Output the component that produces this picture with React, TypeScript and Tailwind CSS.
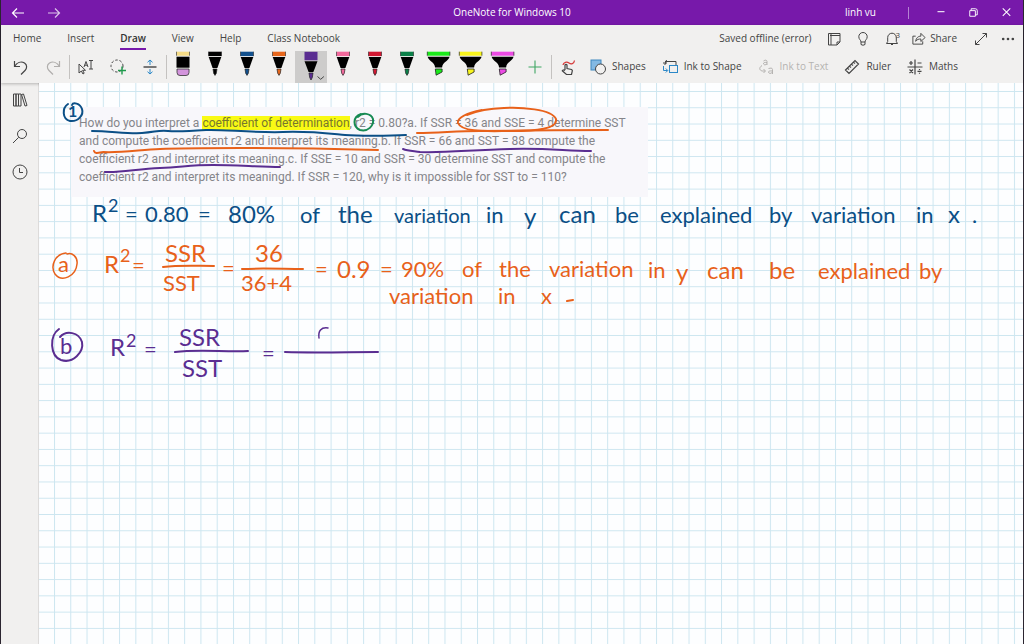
import type { ReactNode } from "react";

type PenProps = { color: string; name: string };
type Word = { x: number; y: number; text: string; size?: string };

const BLUE = "#0b4f86";
const ORANGE = "#e8611a";
const PURPLE = "#5a2d91";

const tabs = ["Home", "Insert", "Draw", "View", "Help", "Class Notebook"];

const blueWords: Word[] = [
  { x: 92, y: 222, text: "R", size: "text-[24px]" },
  { x: 108, y: 212, text: "2", size: "text-[18px]" },
  { x: 125, y: 222, text: "=" },
  { x: 145, y: 222, text: "0.80" },
  { x: 198, y: 222, text: "=" },
  { x: 228, y: 223, text: "80%", size: "text-[24px]" },
  { x: 300, y: 223, text: "of" },
  { x: 338, y: 223, text: "the", size: "text-[24px]" },
  { x: 394, y: 223, text: "variation", size: "text-[20px]" },
  { x: 486, y: 223, text: "in" },
  { x: 524, y: 225, text: "y", size: "text-[24px]" },
  { x: 559, y: 223, text: "can", size: "text-[24px]" },
  { x: 615, y: 223, text: "be" },
  { x: 660, y: 223, text: "explained" },
  { x: 769, y: 223, text: "by" },
  { x: 811, y: 223, text: "variation" },
  { x: 916, y: 223, text: "in" },
  { x: 948, y: 223, text: "x", size: "text-[24px]" },
  { x: 972, y: 223, text: "." },
];

const orangeWords: Word[] = [
  { x: 58, y: 272, text: "a" },
  { x: 104, y: 273, text: "R", size: "text-[24px]" },
  { x: 120, y: 262, text: "2", size: "text-[18px]" },
  { x: 132, y: 273, text: "=" },
  { x: 165, y: 262, text: "SSR", size: "text-[24px]" },
  { x: 163, y: 291, text: "SST" },
  { x: 222, y: 276, text: "=" },
  { x: 255, y: 262, text: "36", size: "text-[24px]" },
  { x: 241, y: 291, text: "36+4" },
  { x: 315, y: 277, text: "=" },
  { x: 337, y: 278, text: "0.9", size: "text-[24px]" },
  { x: 380, y: 277, text: "=" },
  { x: 401, y: 277, text: "90%" },
  { x: 462, y: 277, text: "of" },
  { x: 499, y: 277, text: "the" },
  { x: 549, y: 277, text: "variation" },
  { x: 648, y: 278, text: "in" },
  { x: 676, y: 281, text: "y", size: "text-[24px]" },
  { x: 707, y: 279, text: "can", size: "text-[24px]" },
  { x: 769, y: 279, text: "be", size: "text-[24px]" },
  { x: 818, y: 279, text: "explained" },
  { x: 919, y: 279, text: "by" },
  { x: 389, y: 304, text: "variation" },
  { x: 498, y: 304, text: "in" },
  { x: 541, y: 304, text: "x" },
];

const purpleWords: Word[] = [
  { x: 60, y: 354, text: "b" },
  { x: 110, y: 356, text: "R", size: "text-[24px]" },
  { x: 126, y: 347, text: "2", size: "text-[18px]" },
  { x: 144, y: 357, text: "=" },
  { x: 179, y: 346, text: "SSR", size: "text-[24px]" },
  { x: 182, y: 377, text: "SST", size: "text-[24px]" },
  { x: 262, y: 361, text: "=" },
];

const InkWords = ({ words, color }: { words: Word[]; color: string }) => (
  <g fill={color} className="font-['Lato',sans-serif]">
    {words.map((w) => (
      <text key={`${w.x}-${w.y}`} x={w.x} y={w.y} className={w.size ?? "text-[22px]"}>
        {w.text}
      </text>
    ))}
  </g>
);

const Icon = ({ children, size = 16 }: { children: ReactNode; size?: number }) => (
  <svg
    width={size}
    height={size}
    viewBox="0 0 16 16"
    fill="none"
    stroke="currentColor"
    strokeWidth="1"
    className="shrink-0"
    aria-hidden="true"
  >
    {children}
  </svg>
);

const Tool = ({ label, children }: { label: string; children: ReactNode }) => (
  <button aria-label={label} className="flex h-8 w-8 shrink-0 items-center justify-center">
    {children}
  </button>
);

const TextTool = ({ label, children, disabled }: { label: string; children: ReactNode; disabled?: boolean }) => (
  <button disabled={disabled} className="flex items-center gap-1.5 whitespace-nowrap disabled:text-[#b5b3b1]">
    {children}
    {label}
  </button>
);

const Divider = () => <span className="h-6 w-px shrink-0 bg-[#c4c2c0]" />;

const Pen = ({ color, name }: PenProps) => (
  <button aria-label={name} className="h-8 w-8 shrink-0">
    <svg width="32" height="32" viewBox="0 0 32 32" aria-hidden="true">
      <rect x="9.5" y="0.7" width="13" height="4.4" fill={color} />
      <path d="M9.5 .7v4.4M22.5 .7v4.4" stroke="#222" strokeWidth=".6" />
      <path d="M9.7 5.9h12.6L18.4 16.9h-4.8z" fill="#000" />
      <path d="M14 18h4l-.7 4.2-1.3 2.2-1.3-2.2z" fill={color} stroke="#222" strokeWidth=".7" />
    </svg>
  </button>
);

const Highlighter = ({ color, name }: PenProps) => (
  <button aria-label={name} className="h-8 w-8 shrink-0">
    <svg width="32" height="32" viewBox="0 0 32 32" aria-hidden="true">
      <rect x="4.3" y="0.7" width="22.6" height="4" fill={color} />
      <path d="M4.3 .7v4M26.9 .7v4" stroke="#222" strokeWidth=".7" />
      <path d="M4.6 5.7h22c-1.2 4.6-7 5-7.5 10.8h-7C11.6 10.7 5.8 10.3 4.6 5.7z" fill="#000" />
      <path d="M12.3 18h6.8v3l-6 3.2-.3-2.4z" fill={color} stroke="#222" strokeWidth=".8" />
    </svg>
  </button>
);

const TitleBar = () => (
  <header className="grid h-[25px] grid-cols-[1fr_auto_1fr] items-center bg-[#7719aa] text-[10px] text-white">
    <div className="flex items-center gap-5 pl-[9px]">
      <button aria-label="Back">
        <Icon>
          <path d="M14 8H2.5M7 3.5 2.5 8 7 12.5" strokeWidth="1.2" />
        </Icon>
      </button>
      <button aria-label="Forward" className="opacity-75">
        <Icon>
          <path d="M2 8h11.5M9 3.5 13.5 8 9 12.5" strokeWidth="1.2" />
        </Icon>
      </button>
    </div>
    <h1>OneNote for Windows 10</h1>
    <div className="flex items-center justify-end pr-[9px]">
      <span className="mr-8">linh vu</span>
      <span className="mr-[25px] h-3 w-px bg-[#b583d3]" />
      <button aria-label="Minimise" className="mr-[18px]">
        <Icon size={14}>
          <path d="M4 6.5h8" strokeWidth="1.2" />
        </Icon>
      </button>
      <button aria-label="Restore" className="mr-[18px]">
        <Icon size={15}>
          <path d="M4 6h6v6H4zM5.5 6V4H10q2 0 2 2v4.5H10" />
        </Icon>
      </button>
      <button aria-label="Close">
        <Icon size={15}>
          <path d="m4 3.5 8 8M12 3.5l-8 8" strokeWidth="1.1" />
        </Icon>
      </button>
    </div>
  </header>
);

const TabRow = () => (
  <div className="flex h-[25px] items-center justify-between pr-2 pl-3">
    <nav className="flex h-full gap-[26px]">
      {tabs.map((tab) => (
        <button
          key={tab}
          className={
            tab === "Draw"
              ? "border-b-2 border-[#7719aa] pt-[3px] font-semibold whitespace-nowrap text-[#333]"
              : "border-b-2 border-transparent pt-[3px] whitespace-nowrap"
          }
        >
          {tab}
        </button>
      ))}
    </nav>
    <div className="flex items-center pt-0.5">
      <span className="mr-3.5 whitespace-nowrap">Saved offline (error)</span>
      <button aria-label="Feed" className="mr-[13px]">
        <Icon>
          <path d="M2.5 2.5h11.5v8.5l-3 3H2.5zM5 2.5V14M14 11h-3v3M4 4.5h10" />
        </Icon>
      </button>
      <button aria-label="Tips" className="mr-[13px]">
        <Icon>
          <path d="M6 11C6 9 3.8 8.5 3.8 5.7a4.2 4.2 0 0 1 8.4 0C12.2 8.5 10 9 10 11zM6 11v2.5q2 1.5 4 0V11" />
        </Icon>
      </button>
      <button aria-label="Notifications" className="mr-[11px] flex">
        <Icon>
          <path d="M2.5 12.5h11L12.3 10.5V6.5a4.3 4.3 0 0 0-8.6 0v4zM6.5 12.5q1.5 3 3 0" />
        </Icon>
        <span className="-ml-1 text-[8px] leading-none">3</span>
      </button>
      <button className="mr-4 flex items-center gap-1">
        <Icon size={15}>
          <path d="M5 5.5H2v8.5h10.5V11M5 11c.5-4 3-5.5 5.500-5.500V2.500L15 7l-4.500 4.200V8.500C8 8.500 6.500 9 5 11z" />
        </Icon>
        Share
      </button>
      <button aria-label="Full screen" className="mr-3">
        <Icon>
          <path d="M2.5 13.5l11-11M9.5 2.5h4v4M2.5 9.5v4h4" />
        </Icon>
      </button>
      <button aria-label="More">
        <Icon size={14}>
          <g fill="currentColor" stroke="none">
            <circle cx="2.5" cy="8" r="1.5" />
            <circle cx="8" cy="8" r="1.5" />
            <circle cx="13.5" cy="8" r="1.5" />
          </g>
        </Icon>
      </button>
    </div>
  </div>
);

const DrawTools = () => (
  <div className="flex h-[33px] items-center pl-1">
    <Tool label="Undo">
      <Icon>
        <path d="M1.5 2v5.5H7M1.5 7.5C4 3.5 8 2 11.5 4c3 2 2.5 5.5.5 7.5L8 15.5" strokeWidth="1.2" />
      </Icon>
    </Tool>
    <Tool label="Redo">
      <span className="text-[#b0aeac]">
        <Icon>
          <path d="M14.5 2v5.5H9M14.5 7.5C12 3.5 8 2 4.5 4c-3 2-2.5 5.5-.5 7.5L8 15.5" strokeWidth="1.2" />
        </Icon>
      </span>
    </Tool>
    <Divider />
    <Tool label="Select objects or type text">
      <Icon>
        <path d="M1 5v9l2.3-2 1.7 3 1.2-.8-1.6-2.9H7.5z" />
        <path d="M6 8 8 2.5 10 8M6.7 6.2h2.6M11 1.5h4M11 10h4M13 1.5V10" />
      </Icon>
    </Tool>
    <Tool label="Lasso select">
      <Icon>
        <circle cx="7" cy="7" r="6" strokeDasharray="2.5 1.8" />
        <path d="M12 7.5v8M8 11.5h8" stroke="#1f9a4c" strokeWidth="1.4" />
      </Icon>
    </Tool>
    <Tool label="Insert or remove space">
      <Icon>
        <path d="M1.5 8h13" stroke="#777" strokeWidth="2" />
        <path d="M8 6V1M5.5 3.3 8 1l2.5 2.3M8 10v5M5.5 12.7 8 15l2.5-2.3" stroke="#2b88c8" />
      </Icon>
    </Tool>
    <Divider />
    <button aria-label="Eraser" className="h-8 w-8 shrink-0">
      <svg width="32" height="32" viewBox="0 0 32 32" aria-hidden="true">
        <rect x="9.5" y=".7" width="13" height="4" fill="#f6dc86" />
        <path d="M9.5 .7v4M22.5 .7v4" stroke="#222" strokeWidth=".6" />
        <rect x="9.5" y="5.7" width="13" height="11" fill="#000" />
        <path d="M10 18h12v3.5q0 3-3 3h-6q-3 0-3-3z" fill="#d394dc" stroke="#333" strokeWidth=".8" />
      </svg>
    </button>
    <Pen name="Black pen" color="#000000" />
    <Pen name="Blue pen" color="#12508d" />
    <Pen name="Orange pen" color="#e8671c" />
    <button aria-label="Purple pen" aria-pressed="true" className="h-8 w-8 shrink-0 bg-[#cdcccb]">
      <svg width="32" height="32" viewBox="0 0 32 32" aria-hidden="true">
        <rect x="9.5" y=".8" width="13" height="8.5" fill="#5a2d91" />
        <path d="M9.5 10.3h13L18.4 21h-4.8z" fill="#000" />
        <path d="M14 22h4l-.7 4.5-1.3 2.5-1.3-2.5z" fill="#5a2d91" stroke="#222" strokeWidth=".7" />
        <path d="m22.5 25.5 3.2 2.8 3.2-2.8" fill="none" stroke="#444" />
      </svg>
    </button>
    <Pen name="Pink pen" color="#f2699c" />
    <Pen name="Red pen" color="#d21832" />
    <Pen name="Green pen" color="#0b8048" />
    <Highlighter name="Green highlighter" color="#1bea1b" />
    <Highlighter name="Yellow highlighter" color="#f8f51d" />
    <Highlighter name="Magenta highlighter" color="#ec4be4" />
    <Tool label="Add pen">
      <Icon>
        <path d="M8 1.5v13M1.5 8h13" stroke="#3fa663" strokeWidth="1.1" />
      </Icon>
    </Tool>
    <Divider />
    <Tool label="Draw with touch">
      <Icon>
        <path d="M5 11V6q1-1.2 2 0v3.5l4.5 1q1 .4.8 1.5L11.5 15.5h-5L2.3 11.8q.7-1.5 2.7-.3" strokeWidth="1.2" />
        <path d="M3 6c.5-3 4-3.5 6-2s5 1 5.5-2.5" stroke="#d63a3a" strokeWidth="1.3" />
      </Icon>
    </Tool>
    <div className="flex items-center gap-4 pl-1.5">
      <TextTool label="Shapes">
        <Icon>
          <rect x="1" y="1" width="10" height="10" fill="#83b9e3" stroke="#3f87bf" />
          <circle cx="10.5" cy="10" r="5" fill="#f1f0ef" />
        </Icon>
      </TextTool>
      <TextTool label="Ink to Shape">
        <Icon>
          <path d="M14 6V2.5H3M4.5 1 2.8 6M1 4h4" />
          <rect x="7.5" y="6.5" width="8" height="7" stroke="#2b88c8" />
          <path d="M1.5 7v4.5h4M3.8 9.5l2 2-2 2" stroke="#2b88c8" />
        </Icon>
      </TextTool>
      <TextTool label="Ink to Text" disabled>
        <Icon>
          <path d="M5.5 2q3-2 3.5.5v3.5M9 3.5q-4-.5-3.5 1.5 1 2 3.5 0M10.5 9.500q4-1.500 4 1V15M14.500 12q-4.500-.5-4 1.500 1 2 4 0M4 6.500c-3 2-3 4.500 0 5.500h3M5.500 10l2 2-2 2" />
        </Icon>
      </TextTool>
      <TextTool label="Ruler">
        <Icon>
          <path d="m1.5 11 9.5-9.5 3.5 3.5L5 14.5zM3.5 9l1.5 1.5M5.5 7 7 8.500M7.500 5 9 6.500M9.500 3 11 4.500" strokeWidth="1.2" />
        </Icon>
      </TextTool>
      <TextTool label="Maths">
        <Icon>
          <path d="M8 .5v15M.5 8h15M2 4h4M4 2v4M10.5 4h4M2.5 10.5l3.5 3.5M6 10.5 2.5 14M10.5 12.3h4M12.5 10v1M12.5 13.7v1" strokeWidth="1.2" />
        </Icon>
      </TextTool>
    </div>
  </div>
);

const Sidebar = () => (
  <aside className="flex w-[38px] shrink-0 flex-col items-center gap-5 border-r border-[#dddbda] bg-[#f1f0ef] pt-[9px]">
    <button aria-label="Show notebooks">
      <Icon>
        <path d="M1.5 2h2.5v12H1.5zM4 2h2.5v12H4zM6.5 2H9v12H6.5zM9.5 2.5l2-.5 3.5 11.5-2 .5z" />
      </Icon>
    </button>
    <button aria-label="Search">
      <Icon>
        <circle cx="10" cy="6" r="4.5" />
        <path d="M6.7 9.3 1 15" />
      </Icon>
    </button>
    <button aria-label="Recent notes">
      <Icon>
        <circle cx="8" cy="8" r="7" />
        <path d="M7.5 4v4.5H11" />
      </Icon>
    </button>
  </aside>
);

const Question = () => (
  <div className="absolute top-6 left-8 h-[90px] w-[577px] bg-[#f8f7fb] pt-[7px] pl-2 font-['Roboto',sans-serif] text-[12px] leading-[18px] whitespace-nowrap text-[#85858a]">
    <p>
      How do you interpret a <mark className="bg-[#f9fa14] text-[#77772e]">coefficient of determination</mark>, r2 = 0.80?a. If SSR = 36 and SSE = 4 determine SST
    </p>
    <p>and compute the coefficient r2 and interpret its meaning.b. If SSR = 66 and SST = 88 compute the</p>
    <p>coefficient r2 and interpret its meaning.c. If SSE = 10 and SSR = 30 determine SST and compute the</p>
    <p>coefficient r2 and interpret its meaningd. If SSR = 120, why is it impossible for SST to = 110?</p>
  </div>
);

const Ink = () => (
  <svg className="absolute inset-0 h-full w-full" fill="none" strokeLinecap="round" strokeLinejoin="round">
    <g transform="translate(-39 -83)" strokeWidth="2">
      {/* underlines and rings over the question */}
      <g stroke={BLUE}>
        <path d="M92 131C110 131 128 134 142 133S158 130 168 131 192 131 206 130 255 133 283 132 333 134 345 135 390 136 406 135" />
        <path d="M68 104C62 108 62 119 70 121 78 122 84 115 82 109 80 103 73 102 72 105" />
      </g>
      <g stroke={ORANGE}>
        <path d="M94 151C95 154 98 153 103 152 120 153 139 150 160 149S215 148 240 148 340 149 378 150" />
        <path d="M417 133C440 133 455 131 480 131S570 130 608 130" />
        <path d="M482 110C468 113 457 117 458 123 462 133 490 131 511 131 536 131 558 129 556 119 552 109 520 107 504 108 480 109 472 113 467 115" />
      </g>
      <g stroke={PURPLE}>
        <path d="M105 172C120 173 137 169 160 168S190 165 213 165 260 167 280 167" />
        <path d="M403 149C408 151 414 151 420 152 445 153 470 150 510 149S565 151 591 151" />
      </g>
      <path d="M361 114C352 117 353 127 360 130 368 132 374 126 373 119 371 113 362 112 358 117" stroke="#178a53" />

      {/* answer marks: item rings and fraction bars */}
      <g stroke={ORANGE}>
        <path d="M66 253C55 254 50 266 55 274 62 283 76 276 77 264 78 257 72 252 67 254" strokeWidth="1.5" />
        <path d="M163 267C180 265 196 266 214 266" />
        <path d="M242 269C262 268 284 269 303 269" />
        <path d="M567 301l6-1" />
      </g>
      <g stroke={PURPLE}>
        <path d="M59 329C49 336 50 356 61 360 73 364 84 352 82 342 79 332 66 330 60 337" />
        <path d="M175 352C198 349 224 352 248 351" />
        <path d="M285 352C315 353 350 352 378 352" />
        <path d="M319 338C318 331 321 327 328 328" strokeWidth="1.5" />
      </g>

      <text x="68" y="117" fill={BLUE} className="font-['Lato',sans-serif] text-[16px] font-bold">
        1
      </text>
      <InkWords words={blueWords} color={BLUE} />
      <InkWords words={orangeWords} color={ORANGE} />
      <InkWords words={purpleWords} color={PURPLE} />
    </g>
  </svg>
);

const App = () => (
  <div className="flex min-h-screen flex-col border-x border-[#2b2530] bg-[#f1f0ef] font-['Open_Sans',sans-serif] text-[10px] text-[#444]">
    <TitleBar />
    <div className="relative shadow-[0_1px_3px_rgba(0,0,0,0.25)]">
      <TabRow />
      <DrawTools />
    </div>
    <div className="flex grow">
      <Sidebar />
      <main className="relative grow overflow-hidden bg-[#fdfeff]">
        {/* squared paper */}
        <svg className="absolute inset-0 h-full w-full" aria-hidden="true">
          <defs>
            <pattern id="squares" x="15" y="8" width="16.27" height="16.27" patternUnits="userSpaceOnUse">
              <path d="M.5 0v16.27M0 .5h16.27" stroke="#cde6f0" strokeWidth="1" />
            </pattern>
          </defs>
          <rect width="100%" height="100%" fill="url(#squares)" />
        </svg>
        <Question />
        <Ink />
      </main>
    </div>
  </div>
);

export default App;
